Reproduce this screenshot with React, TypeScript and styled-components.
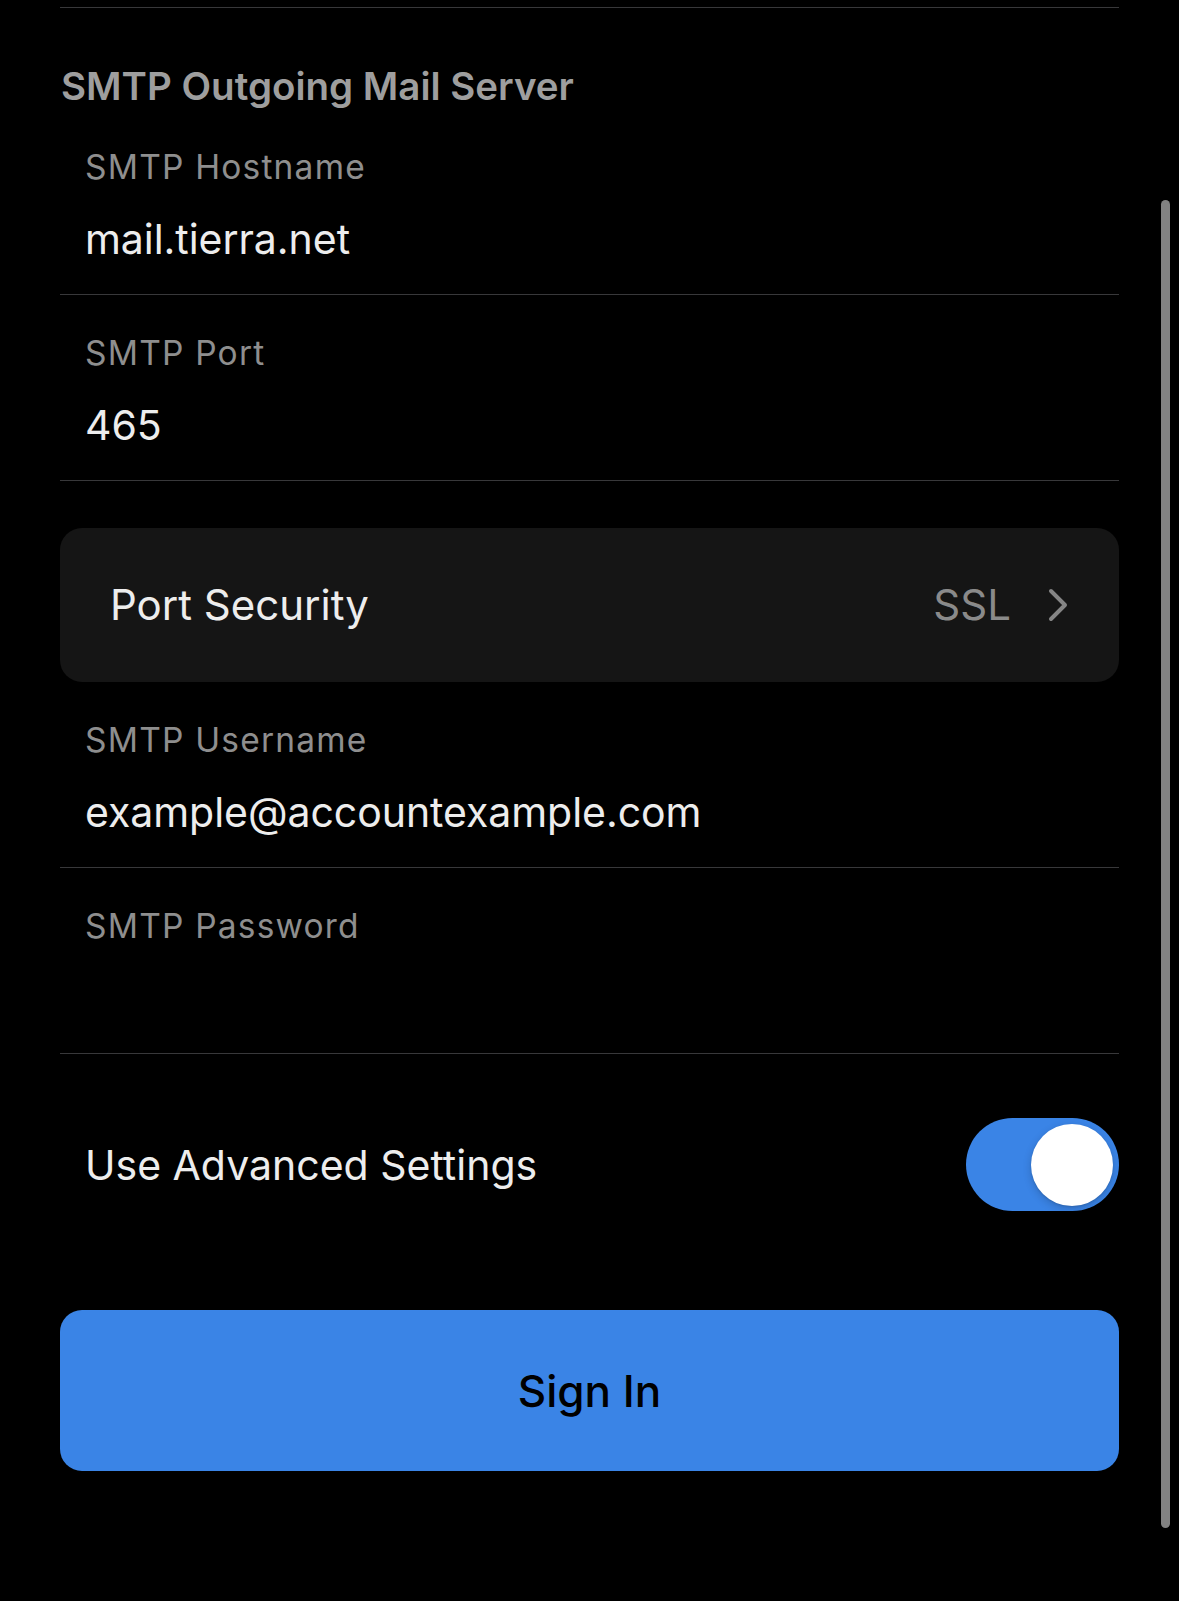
import React from "react";
import styled, { createGlobalStyle } from "styled-components";

const Global = createGlobalStyle`
  html, body {
    margin: 0;
    padding: 0;
    background: #000;
  }
  body {
    font-family: Inter, "Noto Sans", "Liberation Sans", sans-serif;
    -webkit-font-smoothing: antialiased;
  }
  #root {
    min-height: 1601px;
  }
`;

const Page = styled.div`
  position: relative;
  min-height: 1601px;
  padding: 7px 60px 0 60px;
  box-sizing: border-box;
  background: #000;
  color: #ededed;
`;

const Divider = styled.div`
  height: 1px;
  background: #38383a;
`;

const SectionTitle = styled.h2`
  margin: 0;
  padding: 56px 0 1px 1px;
  font-size: 38.5px;
  line-height: 44px;
  font-weight: 600;
  color: #9e9e9e;
  letter-spacing: 0;
`;

const Field = styled.div`
  display: flex;
  flex-direction: column;
  padding: 38px 0 30px 25px;
  border-bottom: 1px solid #38383a;
`;

const Label = styled.div`
  font-size: 33.5px;
  line-height: 40px;
  letter-spacing: 1.2px;
  color: #8e8e8e;
`;

const Value = styled.div`
  margin-top: 27px;
  min-height: 50px;
  font-size: 41px;
  line-height: 50px;
  letter-spacing: -0.05px;
  color: #ededed;
`;

const Card = styled.div`
  margin-top: 47px;
  height: 154px;
  border-radius: 22px;
  background: #151515;
  display: flex;
  align-items: center;
  padding: 0 51px 0 50px;
  box-sizing: border-box;
`;

const CardTitle = styled.div`
  flex: 1;
  font-size: 42px;
  line-height: 50px;
  color: #ededed;
`;

const CardValue = styled.div`
  font-size: 42px;
  line-height: 50px;
  color: #8a8a8a;
  margin-right: 37px;
`;

const ToggleRow = styled.div`
  display: flex;
  align-items: center;
  justify-content: space-between;
  padding: 64px 0 0 25px;
`;

const ToggleLabel = styled.div`
  font-size: 41px;
  line-height: 50px;
  color: #ededed;
`;

const Switch = styled.div<{ $on: boolean }>`
  position: relative;
  width: 153px;
  height: 93px;
  border-radius: 47px;
  background: ${(p) => (p.$on ? "#3a84e6" : "#39393d")};
  flex-shrink: 0;
`;

const Knob = styled.div<{ $on: boolean }>`
  position: absolute;
  top: 5.5px;
  ${(p) => (p.$on ? "right: 6px;" : "left: 6px;")}
  width: 82px;
  height: 82px;
  border-radius: 50%;
  background: #fff;
  box-shadow: 0 3px 8px rgba(0, 0, 0, 0.18), 0 1px 2px rgba(0, 0, 0, 0.12);
`;

const Button = styled.button`
  display: flex;
  align-items: center;
  justify-content: center;
  width: 100%;
  height: 161px;
  margin-top: 99px;
  border: none;
  border-radius: 22px;
  background: #3a84e6;
  color: #000;
  font-family: inherit;
  font-size: 44px;
  font-weight: 500;
  cursor: pointer;
`;

const ScrollIndicator = styled.div`
  position: absolute;
  top: 200px;
  right: 9px;
  width: 9px;
  height: 1328px;
  border-radius: 5px;
  background: #828282;
`;

const Chevron = () => (
  <svg width="20" height="34" viewBox="0 0 20 34" fill="none">
    <path
      d="M3 3 L17 17 L3 31"
      stroke="#858585"
      strokeWidth="4"
      strokeLinecap="round"
      strokeLinejoin="round"
    />
  </svg>
);

const fields1 = [
  { label: "SMTP Hostname", value: "mail.tierra.net" },
  { label: "SMTP Port", value: "465" },
];

const fields2 = [
  { label: "SMTP Username", value: "example@accountexample.com" },
  { label: "SMTP Password", value: "" },
];

export default function App() {
  return (
    <>
      <Global />
      <Page>
        <Divider />
        <SectionTitle>SMTP Outgoing Mail Server</SectionTitle>
        {fields1.map((f) => (
          <Field key={f.label}>
            <Label>{f.label}</Label>
            <Value>{f.value}</Value>
          </Field>
        ))}
        <Card>
          <CardTitle>Port Security</CardTitle>
          <CardValue>SSL</CardValue>
          <Chevron />
        </Card>
        {fields2.map((f) => (
          <Field key={f.label}>
            <Label>{f.label}</Label>
            <Value>{f.value}</Value>
          </Field>
        ))}
        <ToggleRow>
          <ToggleLabel>Use Advanced Settings</ToggleLabel>
          <Switch $on>
            <Knob $on />
          </Switch>
        </ToggleRow>
        <Button>Sign In</Button>
        <ScrollIndicator />
      </Page>
    </>
  );
}
